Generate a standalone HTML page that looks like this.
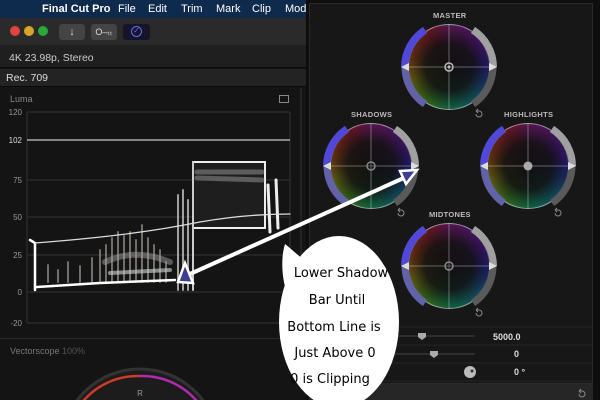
<!DOCTYPE html>
<html><head><meta charset="utf-8"><style>
*{margin:0;padding:0;box-sizing:border-box}
html,body{width:600px;height:400px;overflow:hidden}
body{background:#141414;font-family:"Liberation Sans",sans-serif;position:relative}
.a{position:absolute}
.menu{left:0;top:0;width:310px;height:18px;background:#0e2a4c;color:#fff;font-weight:bold;font-size:11px}
.menu span{position:absolute;top:3px}
.wheel{position:absolute;width:86px;height:86px;border-radius:50%;border:1px solid rgba(230,230,230,.55);
background:radial-gradient(circle,#111 0%,rgba(17,17,17,.92) 40%,rgba(17,17,17,.35) 75%,rgba(17,17,17,0) 100%),conic-gradient(from 0deg,#8a1a78,#5a14a8 60deg,#2a20b0 90deg,#1270a0 130deg,#10a060 180deg,#50a020 215deg,#a09a10 250deg,#b04a10 285deg,#a01830 330deg,#8a1a78)}
.lbl{position:absolute;color:#bbb;font-size:7.5px;font-weight:bold;letter-spacing:.3px}
.v{position:absolute;color:#ddd;font-size:9px;font-weight:bold}
</style></head><body>
<div class="a menu">
<span style="left:15px;font-size:13px;top:1px"></span>
<span style="left:42px">Final Cut Pro</span><span style="left:118px;font-weight:normal">File</span><span style="left:148px;font-weight:normal">Edit</span><span style="left:181px;font-weight:normal">Trim</span><span style="left:216px;font-weight:normal">Mark</span><span style="left:252px;font-weight:normal">Clip</span><span style="left:285px;font-weight:normal">Mod</span>
</div>
<div class="a" style="left:0;top:18px;width:308px;height:27px;background:#2a2a2a"></div>
<div class="a" style="left:10px;top:26px;width:10px;height:10px;border-radius:50%;background:#e0443e"></div>
<div class="a" style="left:24px;top:26px;width:10px;height:10px;border-radius:50%;background:#d9a42a"></div>
<div class="a" style="left:38px;top:26px;width:10px;height:10px;border-radius:50%;background:#27a83a"></div>
<div class="a" style="left:59px;top:24px;width:26px;height:16px;background:#444;border-radius:3px;color:#ddd;font-size:11px;text-align:center;line-height:16px">↓</div>
<div class="a" style="left:91px;top:24px;width:26px;height:16px;background:#444;border-radius:3px;color:#ddd;font-size:9px;text-align:center;line-height:16px">O‒ₜₜ</div>
<div class="a" style="left:123px;top:24px;width:27px;height:16px;background:#15152a;border-radius:3px"></div>
<div class="a" style="left:131px;top:26px;width:11px;height:11px;border-radius:50%;border:1.5px solid #6a6af0;color:#6a6af0;font-size:8px;line-height:8px;text-align:center">✓</div>
<div class="a" style="left:0;top:45px;width:308px;height:23px;background:#1f1f1f;border-bottom:1px solid #0a0a0a;color:#ccc;font-size:10.5px;padding:7px 0 0 9px">4K 23.98p, Stereo</div>
<div class="a" style="left:0;top:69px;width:308px;height:18px;background:#232323;border-bottom:1px solid #0a0a0a;color:#ddd;font-size:10.5px;padding:3px 0 0 6px">Rec. 709</div>
<div class="a" style="left:300px;top:88px;width:2px;height:250px;background:#242424"></div>
<div class="a" style="left:10px;top:94px;color:#888;font-size:9px">Luma</div>
<div class="a" style="left:279px;top:95px;width:10px;height:8px;border:1px solid #888"></div>
<div class="a" style="left:0;top:338px;width:300px;height:1px;background:#2a2a2a"></div>
<div class="a" style="left:10px;top:346px;color:#777;font-size:9px">Vectorscope <span style="color:#555">100%</span></div>
<svg class="a" style="left:0;top:0" width="600" height="400">
<g font-size="8" fill="#999" font-family="Liberation Sans" text-anchor="end">
<text x="22" y="115">120</text><text x="22" y="143" fill="#ddd">102</text><text x="22" y="183">75</text><text x="22" y="220">50</text><text x="22" y="258">25</text><text x="22" y="295">0</text><text x="22" y="326">-20</text></g>
<g stroke="#333" stroke-width="1"><path d="M27 112H290M27 180H290M27 217H290M27 255H290M27 292H290M27 323H290M27 112V323M290 112V323"/></g>
<path d="M27 140H290" stroke="#aaa" stroke-width="1.5"/>
<g fill="none" stroke-linecap="round">
<path d="M48 282V265M58 282V270M68 282V262M80 282V266M92 282V258M100 282V250M106 282V245M112 282V238M118 282V232M124 282V236M130 282V232M136 282V240M142 282V225M148 282V238M154 282V245M160 282V250M166 282V262" stroke="#8a8580" stroke-width="2" opacity=".8"/>
<path d="M105 262 C120 255 140 250 170 262" stroke="#aaa" stroke-width="6" opacity=".45"/>
<path d="M110 273 L170 270" stroke="#cfd8d0" stroke-width="4" opacity=".6"/>
<path d="M178 195 L178 290 M183 190 L183 290 M188 200 L188 290" stroke="#ddd" stroke-width="2" opacity=".7"/>
<rect x="193" y="162" width="72" height="66" fill="#1e1e1e" stroke="#eee" stroke-width="2"/>
<path d="M197 172 L262 172 M197 178 L262 180" stroke="#999" stroke-width="5" opacity=".5"/>
<path d="M193 162 V290" stroke="#ccc" stroke-width="2"/>
<path d="M268 185 L270 232 M276 180 L278 228" stroke="#eee" stroke-width="3"/>
<path d="M30 240 L35 243 L35 290 M37 287 L100 283 L175 280" stroke="#fff" stroke-width="2.5"/>
<path d="M35 243 C100 238 150 232 200 222 C240 215 270 214 290 214" stroke="#ddd" stroke-width="1.3"/>
</g>
<circle cx="140" cy="448" r="79" fill="#1c1c1c" stroke="#333" stroke-width="3"/>
<path d="M80 405 A72 72 0 0 1 140 376" stroke="#d03a2a" stroke-width="2.5" fill="none"/>
<path d="M140 376 A72 72 0 0 1 200 405" stroke="#b02ab0" stroke-width="2.5" fill="none"/>
<text x="140" y="396" fill="#999" font-size="8" text-anchor="middle">R</text>
</svg>
<div class="a" style="left:306px;top:0;width:294px;height:400px;background:#0e0e0e"></div>
<div class="a" style="left:309px;top:3px;width:284px;height:381px;background:#171717;border:1px solid #2a2a2a"></div>
<div class="a" style="left:309px;top:384px;width:284px;height:16px;background:#262626"></div>
<div class="lbl" style="left:433px;top:11px">MASTER</div>
<div class="lbl" style="left:351px;top:110px">SHADOWS</div>
<div class="lbl" style="left:504px;top:110px">HIGHLIGHTS</div>
<div class="lbl" style="left:429px;top:210px">MIDTONES</div>
<div class="wheel" style="left:406px;top:24px"></div>
<div class="wheel" style="left:328px;top:123px"></div>
<div class="wheel" style="left:485px;top:123px"></div>
<div class="wheel" style="left:406px;top:223px"></div>
<svg class="a" style="left:0;top:0" width="600" height="400">
<defs>
<g id="w">
<path d="M-26 -40 A48 48 0 0 0 -26 40 L-22 34 A41 41 0 0 1 -22 -34Z" fill="#6262a8"/>
<path d="M-26 -40 A48 48 0 0 0 -48 0 L-41 0 A41 41 0 0 1 -22 -34Z" fill="#5048d8"/>
<path d="M26 -40 A48 48 0 0 1 26 40 L22 34 A41 41 0 0 0 22 -34Z" fill="#5a5a5a"/>
<path d="M26 -40 A48 48 0 0 1 48 0 L41 0 A41 41 0 0 0 22 -34Z" fill="#a0a0a0"/>
<path d="M-43 0H43M0 -43V43" stroke="rgba(200,200,200,.45)" stroke-width="1"/>
<path d="M-48 0 L-40 -4 L-40 4Z M48 0 L40 -4 L40 4Z" fill="#ddd"/>
<path d="M27 47 a3 3 0 1 0 3 -3 h-3 m0 0 l2 -2 m-2 2 l2 2" stroke="#888" stroke-width="1" fill="none"/>
</g></defs>
<use href="#w" x="449" y="67"/><use href="#w" x="371" y="166"/><use href="#w" x="528" y="166"/><use href="#w" x="449" y="266"/>
<circle cx="449" cy="67" r="4" fill="none" stroke="#bbb" stroke-width="1.5"/><circle cx="449" cy="67" r="1.5" fill="#bbb"/>
<circle cx="371" cy="166" r="4" fill="none" stroke="#888" stroke-width="1.5"/>
<circle cx="528" cy="166" r="4.5" fill="#aaa"/>
<circle cx="449" cy="266" r="4" fill="none" stroke="#888" stroke-width="1.5"/>
<path d="M579 394 a3 3 0 1 0 3 -3 h-3 m0 0 l2 -2 m-2 2 l2 2" stroke="#888" stroke-width="1" fill="none"/>
<g stroke="#262626"><path d="M310 327H592M310 345H592M310 363H592M310 381H592"/></g>
<path d="M395 336H475M395 354H475" stroke="#2e2e2e" stroke-width="2"/>
<path d="M418 333H426V337L422 340L418 337Z M430 351H438V355L434 358L430 355Z" fill="#aaa"/>
<circle cx="470" cy="372" r="6" fill="#bbb"/><circle cx="472" cy="371" r="1.5" fill="#333"/>
</svg>
<div class="v" style="left:493px;top:332px">5000.0</div>
<div class="v" style="left:514px;top:349px">0</div>
<div class="v" style="left:514px;top:367px">0 °</div>
<svg class="a" style="left:0;top:0" width="600" height="400">
<ellipse cx="339" cy="322" rx="60" ry="86" fill="#fff"/>
<path d="M285 244 C295 252 305 262 315 268 L290 300 C282 285 280 260 285 244Z" fill="#fff"/>
<line x1="190" y1="274" x2="406" y2="177" stroke="#fff" stroke-width="4"/>
<path d="M178 282 L185 263 L193 283Z" fill="#3f3c94" stroke="#fff" stroke-width="2.5"/>
<path d="M400 171 L417 170 L406 184Z" fill="#3f3c94" stroke="#fff" stroke-width="2.5"/>
<g font-family="DejaVu Sans" font-size="13" fill="#000" text-anchor="middle">
<text x="341" y="277">Lower Shadow</text><text x="337" y="304">Bar Until</text><text x="334" y="331">Bottom Line is</text><text x="335" y="357">Just Above 0</text><text x="330" y="383">0 is Clipping</text></g>
</svg>
</body></html>
